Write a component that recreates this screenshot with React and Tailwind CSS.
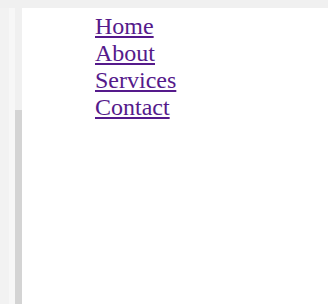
export default function App() {
  const links = ["Home", "About", "Services", "Contact"];
  return (
    <div className="w-[328px] h-[304px] flex flex-col bg-white overflow-hidden">
      <div className="h-[8px] shrink-0 bg-[#f0f0f0]" />
      <div className="flex flex-1 min-h-0">
        <div className="w-[22px] shrink-0 flex bg-[#f4f4f4]">
          <div className="w-[9px] bg-[#f2f2f2]" />
          <div className="w-[6px] bg-[#f7f7f7]" />
          <div className="w-[7px] flex flex-col">
            <div className="h-[102px] bg-[#f0f0f0]" />
            <div className="flex-1 bg-[#d4d4d4]" />
          </div>
        </div>
        <div className="flex-1 bg-white pt-[5px] pl-[73px]">
          <ul className="font-['Liberation_Serif',serif] text-[24px] leading-[27px]">
            {links.map((l) => (
              <li key={l}>
                <a href="#" className="text-[#551a8b] underline">{l}</a>
              </li>
            ))}
          </ul>
        </div>
      </div>
    </div>
  );
}
